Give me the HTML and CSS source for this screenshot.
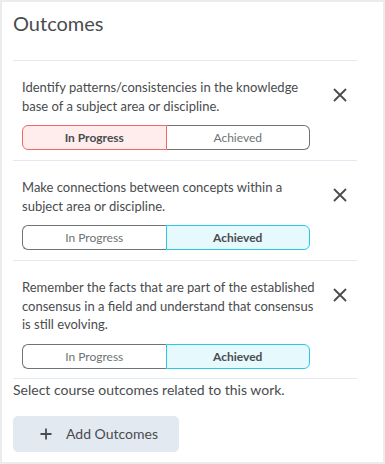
FILE: index.html
```html
<!DOCTYPE html>
<html>
<head>
<meta charset="utf-8">
<link rel="stylesheet" href="styles.css">
</head>
<body>
<div class="panel">
  <h2 class="title">Outcomes</h2>
  <ul class="list">
    <li class="item">
      <div class="row">
        <p class="desc">Identify patterns/consistencies in the knowledge base of a subject area or discipline.</p>
        <button class="close" aria-label="Remove"><svg width="14" height="14" viewBox="0 0 14 14"><path d="M1.5 1.5 L12.5 12.5 M12.5 1.5 L1.5 12.5" stroke="#494c4e" stroke-width="1.8" stroke-linecap="round"/></svg></button>
      </div>
      <div class="toggle">
        <span class="opt opt-left sel-progress">In Progress</span>
        <span class="opt opt-right">Achieved</span>
      </div>
    </li>
    <li class="item">
      <div class="row">
        <p class="desc">Make connections between concepts within a subject area or discipline.</p>
        <button class="close" aria-label="Remove"><svg width="14" height="14" viewBox="0 0 14 14"><path d="M1.5 1.5 L12.5 12.5 M12.5 1.5 L1.5 12.5" stroke="#494c4e" stroke-width="1.8" stroke-linecap="round"/></svg></button>
      </div>
      <div class="toggle">
        <span class="opt opt-left">In Progress</span>
        <span class="opt opt-right sel-achieved">Achieved</span>
      </div>
    </li>
    <li class="item">
      <div class="row">
        <p class="desc">Remember the facts that are part of the established consensus in a field and understand that consensus is still evolving.</p>
        <button class="close" aria-label="Remove"><svg width="14" height="14" viewBox="0 0 14 14"><path d="M1.5 1.5 L12.5 12.5 M12.5 1.5 L1.5 12.5" stroke="#494c4e" stroke-width="1.8" stroke-linecap="round"/></svg></button>
      </div>
      <div class="toggle">
        <span class="opt opt-left">In Progress</span>
        <span class="opt opt-right sel-achieved">Achieved</span>
      </div>
    </li>
  </ul>
  <p class="hint">Select course outcomes related to this work.</p>
  <button class="add"><svg class="plus" width="12" height="12" viewBox="0 0 12 12"><path d="M6 0.5 V11.5 M0.5 6 H11.5" stroke="#494c4e" stroke-width="1.8"/></svg><span>Add Outcomes</span></button>
</div>
</body>
</html>
```
FILE: styles.css
```css
* { box-sizing: border-box; }
html, body { margin: 0; padding: 0; background: #fff; }
body { font-family: Lato, "Noto Sans", sans-serif; color: #494c4e; }
.panel {
  width: 385px;
  height: 464px;
  border: 2px solid #ececec;
  padding: 8px 26px 0 11px;
}
.title {
  margin: 0;
  font-size: 20px;
  font-weight: 400;
  line-height: 26px;
  padding-bottom: 24px;
  border-bottom: 1px solid #e3e9f1;
}
.list { list-style: none; margin: 0; padding: 0; }
.item {
  padding: 17px 0 10px 9px;
  border-bottom: 1px solid #e3e9f1;
}
.item:last-child { padding-bottom: 9px; }
.row { display: flex; align-items: flex-start; }
.desc {
  margin: 0;
  flex: 1;
  font-size: 13px;
  line-height: 18.5px;
  padding-right: 10px;
}
.close {
  border: 0; background: none; padding: 0;
  width: 14px; height: 14px;
  margin: 10px 10px 0 0;
  display: flex;
}
.toggle {
  display: flex;
  width: 288px;
  height: 25px;
  margin-top: 10px;
}
.opt {
  flex: 1;
  display: flex; align-items: center; justify-content: center;
  font-size: 12px;
  color: #6e7376;
  border: 1px solid #6e7376;
}
.opt-left { border-radius: 6px 0 0 6px; border-right: 0; }
.opt-right { border-radius: 0 6px 6px 0; border-left: 1px solid #6e7376; }
.sel-progress {
  background: #ffeded;
  border-color: #f06767;
  border-right: 1px solid #f06767;
  color: #494c4e;
  font-weight: 700;
}
.opt-left.sel-progress + .opt-right { border-left: 0; }
.sel-achieved {
  background: #e6f9fd;
  border-color: #29c8e8;
  color: #494c4e;
  font-weight: 700;
}
.hint {
  margin: 1px 0 0;
  font-size: 14px;
  line-height: 20px;
}
.add {
  margin-top: 16px;
  width: 166px;
  height: 36px;
  border: 0;
  border-radius: 5px;
  background: #e3e9f1;
  font-family: Lato, "Noto Sans", sans-serif;
  font-size: 14px;
  color: #494c4e;
  display: flex; align-items: center;
  padding: 0 0 0 27px;
  gap: 14px;
}
.plus { flex: none; }
```
